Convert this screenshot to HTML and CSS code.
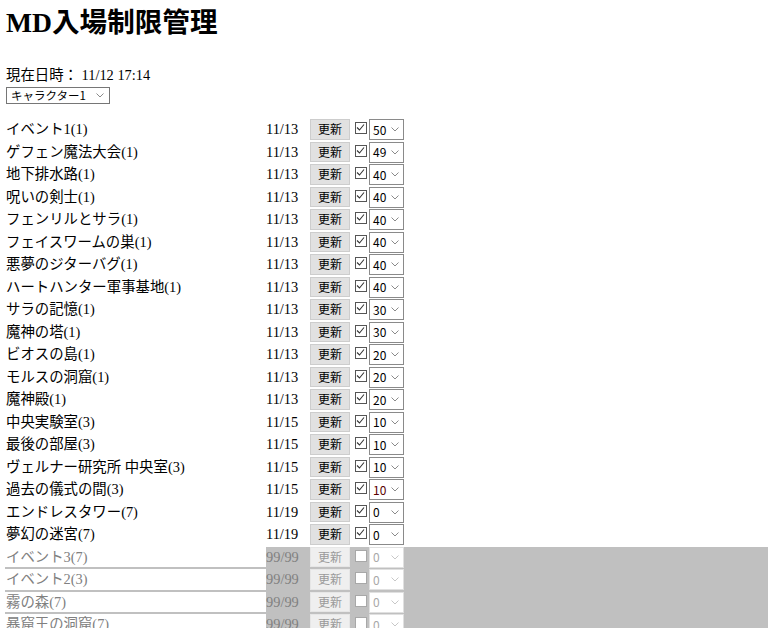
FILE: index.html
```html
<!DOCTYPE html>
<html lang="ja">
<head>
<meta charset="utf-8">
<title>MD入場制限管理</title>
<link rel="stylesheet" href="styles.css">
</head>
<body>
<h1 class="title">MD入場制限管理</h1>
<div class="now">現在日時： 11/12 17:14</div>
<div class="char-select"><span class="char-val">キャラクター1</span><svg class="chev" width="8" height="5" viewBox="0 0 8 5"><polyline points="0.5,0.5 4,4 7.5,0.5" fill="none" stroke="#8a8a8a" stroke-width="1"/></svg></div>
<div class="list">
  <div class="row"><span class="name">イベント1(1)</span><span class="date">11/13</span><button class="btn">更新</button><span class="cb on"><svg width="11" height="11" viewBox="0 0 11 11"><polyline points="2,5.5 4.5,8 9,2.5" fill="none" stroke="#333" stroke-width="1.1"/></svg></span><span class="sel"><span>50</span><svg class="chev" width="8" height="5" viewBox="0 0 8 5"><polyline points="0.5,0.5 4,4 7.5,0.5" fill="none" stroke="#8a8a8a" stroke-width="1"/></svg></span></div>
  <div class="row"><span class="name">ゲフェン魔法大会(1)</span><span class="date">11/13</span><button class="btn">更新</button><span class="cb on"><svg width="11" height="11" viewBox="0 0 11 11"><polyline points="2,5.5 4.5,8 9,2.5" fill="none" stroke="#333" stroke-width="1.1"/></svg></span><span class="sel"><span>49</span><svg class="chev" width="8" height="5" viewBox="0 0 8 5"><polyline points="0.5,0.5 4,4 7.5,0.5" fill="none" stroke="#8a8a8a" stroke-width="1"/></svg></span></div>
  <div class="row"><span class="name">地下排水路(1)</span><span class="date">11/13</span><button class="btn">更新</button><span class="cb on"><svg width="11" height="11" viewBox="0 0 11 11"><polyline points="2,5.5 4.5,8 9,2.5" fill="none" stroke="#333" stroke-width="1.1"/></svg></span><span class="sel"><span>40</span><svg class="chev" width="8" height="5" viewBox="0 0 8 5"><polyline points="0.5,0.5 4,4 7.5,0.5" fill="none" stroke="#8a8a8a" stroke-width="1"/></svg></span></div>
  <div class="row"><span class="name">呪いの剣士(1)</span><span class="date">11/13</span><button class="btn">更新</button><span class="cb on"><svg width="11" height="11" viewBox="0 0 11 11"><polyline points="2,5.5 4.5,8 9,2.5" fill="none" stroke="#333" stroke-width="1.1"/></svg></span><span class="sel"><span>40</span><svg class="chev" width="8" height="5" viewBox="0 0 8 5"><polyline points="0.5,0.5 4,4 7.5,0.5" fill="none" stroke="#8a8a8a" stroke-width="1"/></svg></span></div>
  <div class="row"><span class="name">フェンリルとサラ(1)</span><span class="date">11/13</span><button class="btn">更新</button><span class="cb on"><svg width="11" height="11" viewBox="0 0 11 11"><polyline points="2,5.5 4.5,8 9,2.5" fill="none" stroke="#333" stroke-width="1.1"/></svg></span><span class="sel"><span>40</span><svg class="chev" width="8" height="5" viewBox="0 0 8 5"><polyline points="0.5,0.5 4,4 7.5,0.5" fill="none" stroke="#8a8a8a" stroke-width="1"/></svg></span></div>
  <div class="row"><span class="name">フェイスワームの巣(1)</span><span class="date">11/13</span><button class="btn">更新</button><span class="cb on"><svg width="11" height="11" viewBox="0 0 11 11"><polyline points="2,5.5 4.5,8 9,2.5" fill="none" stroke="#333" stroke-width="1.1"/></svg></span><span class="sel"><span>40</span><svg class="chev" width="8" height="5" viewBox="0 0 8 5"><polyline points="0.5,0.5 4,4 7.5,0.5" fill="none" stroke="#8a8a8a" stroke-width="1"/></svg></span></div>
  <div class="row"><span class="name">悪夢のジターバグ(1)</span><span class="date">11/13</span><button class="btn">更新</button><span class="cb on"><svg width="11" height="11" viewBox="0 0 11 11"><polyline points="2,5.5 4.5,8 9,2.5" fill="none" stroke="#333" stroke-width="1.1"/></svg></span><span class="sel"><span>40</span><svg class="chev" width="8" height="5" viewBox="0 0 8 5"><polyline points="0.5,0.5 4,4 7.5,0.5" fill="none" stroke="#8a8a8a" stroke-width="1"/></svg></span></div>
  <div class="row"><span class="name">ハートハンター軍事基地(1)</span><span class="date">11/13</span><button class="btn">更新</button><span class="cb on"><svg width="11" height="11" viewBox="0 0 11 11"><polyline points="2,5.5 4.5,8 9,2.5" fill="none" stroke="#333" stroke-width="1.1"/></svg></span><span class="sel"><span>40</span><svg class="chev" width="8" height="5" viewBox="0 0 8 5"><polyline points="0.5,0.5 4,4 7.5,0.5" fill="none" stroke="#8a8a8a" stroke-width="1"/></svg></span></div>
  <div class="row"><span class="name">サラの記憶(1)</span><span class="date">11/13</span><button class="btn">更新</button><span class="cb on"><svg width="11" height="11" viewBox="0 0 11 11"><polyline points="2,5.5 4.5,8 9,2.5" fill="none" stroke="#333" stroke-width="1.1"/></svg></span><span class="sel"><span>30</span><svg class="chev" width="8" height="5" viewBox="0 0 8 5"><polyline points="0.5,0.5 4,4 7.5,0.5" fill="none" stroke="#8a8a8a" stroke-width="1"/></svg></span></div>
  <div class="row"><span class="name">魔神の塔(1)</span><span class="date">11/13</span><button class="btn">更新</button><span class="cb on"><svg width="11" height="11" viewBox="0 0 11 11"><polyline points="2,5.5 4.5,8 9,2.5" fill="none" stroke="#333" stroke-width="1.1"/></svg></span><span class="sel"><span>30</span><svg class="chev" width="8" height="5" viewBox="0 0 8 5"><polyline points="0.5,0.5 4,4 7.5,0.5" fill="none" stroke="#8a8a8a" stroke-width="1"/></svg></span></div>
  <div class="row"><span class="name">ビオスの島(1)</span><span class="date">11/13</span><button class="btn">更新</button><span class="cb on"><svg width="11" height="11" viewBox="0 0 11 11"><polyline points="2,5.5 4.5,8 9,2.5" fill="none" stroke="#333" stroke-width="1.1"/></svg></span><span class="sel"><span>20</span><svg class="chev" width="8" height="5" viewBox="0 0 8 5"><polyline points="0.5,0.5 4,4 7.5,0.5" fill="none" stroke="#8a8a8a" stroke-width="1"/></svg></span></div>
  <div class="row"><span class="name">モルスの洞窟(1)</span><span class="date">11/13</span><button class="btn">更新</button><span class="cb on"><svg width="11" height="11" viewBox="0 0 11 11"><polyline points="2,5.5 4.5,8 9,2.5" fill="none" stroke="#333" stroke-width="1.1"/></svg></span><span class="sel"><span>20</span><svg class="chev" width="8" height="5" viewBox="0 0 8 5"><polyline points="0.5,0.5 4,4 7.5,0.5" fill="none" stroke="#8a8a8a" stroke-width="1"/></svg></span></div>
  <div class="row"><span class="name">魔神殿(1)</span><span class="date">11/13</span><button class="btn">更新</button><span class="cb on"><svg width="11" height="11" viewBox="0 0 11 11"><polyline points="2,5.5 4.5,8 9,2.5" fill="none" stroke="#333" stroke-width="1.1"/></svg></span><span class="sel"><span>20</span><svg class="chev" width="8" height="5" viewBox="0 0 8 5"><polyline points="0.5,0.5 4,4 7.5,0.5" fill="none" stroke="#8a8a8a" stroke-width="1"/></svg></span></div>
  <div class="row"><span class="name">中央実験室(3)</span><span class="date">11/15</span><button class="btn">更新</button><span class="cb on"><svg width="11" height="11" viewBox="0 0 11 11"><polyline points="2,5.5 4.5,8 9,2.5" fill="none" stroke="#333" stroke-width="1.1"/></svg></span><span class="sel"><span>10</span><svg class="chev" width="8" height="5" viewBox="0 0 8 5"><polyline points="0.5,0.5 4,4 7.5,0.5" fill="none" stroke="#8a8a8a" stroke-width="1"/></svg></span></div>
  <div class="row"><span class="name">最後の部屋(3)</span><span class="date">11/15</span><button class="btn">更新</button><span class="cb on"><svg width="11" height="11" viewBox="0 0 11 11"><polyline points="2,5.5 4.5,8 9,2.5" fill="none" stroke="#333" stroke-width="1.1"/></svg></span><span class="sel"><span>10</span><svg class="chev" width="8" height="5" viewBox="0 0 8 5"><polyline points="0.5,0.5 4,4 7.5,0.5" fill="none" stroke="#8a8a8a" stroke-width="1"/></svg></span></div>
  <div class="row"><span class="name">ヴェルナー研究所 中央室(3)</span><span class="date">11/15</span><button class="btn">更新</button><span class="cb on"><svg width="11" height="11" viewBox="0 0 11 11"><polyline points="2,5.5 4.5,8 9,2.5" fill="none" stroke="#333" stroke-width="1.1"/></svg></span><span class="sel"><span>10</span><svg class="chev" width="8" height="5" viewBox="0 0 8 5"><polyline points="0.5,0.5 4,4 7.5,0.5" fill="none" stroke="#8a8a8a" stroke-width="1"/></svg></span></div>
  <div class="row"><span class="name">過去の儀式の間(3)</span><span class="date">11/15</span><button class="btn">更新</button><span class="cb on"><svg width="11" height="11" viewBox="0 0 11 11"><polyline points="2,5.5 4.5,8 9,2.5" fill="none" stroke="#333" stroke-width="1.1"/></svg></span><span class="sel"><span class="hl">10</span><svg class="chev" width="8" height="5" viewBox="0 0 8 5"><polyline points="0.5,0.5 4,4 7.5,0.5" fill="none" stroke="#8a8a8a" stroke-width="1"/></svg></span></div>
  <div class="row"><span class="name">エンドレスタワー(7)</span><span class="date">11/19</span><button class="btn">更新</button><span class="cb on"><svg width="11" height="11" viewBox="0 0 11 11"><polyline points="2,5.5 4.5,8 9,2.5" fill="none" stroke="#333" stroke-width="1.1"/></svg></span><span class="sel"><span>0</span><svg class="chev" width="8" height="5" viewBox="0 0 8 5"><polyline points="0.5,0.5 4,4 7.5,0.5" fill="none" stroke="#8a8a8a" stroke-width="1"/></svg></span></div>
  <div class="row"><span class="name">夢幻の迷宮(7)</span><span class="date">11/19</span><button class="btn">更新</button><span class="cb on"><svg width="11" height="11" viewBox="0 0 11 11"><polyline points="2,5.5 4.5,8 9,2.5" fill="none" stroke="#333" stroke-width="1.1"/></svg></span><span class="sel"><span>0</span><svg class="chev" width="8" height="5" viewBox="0 0 8 5"><polyline points="0.5,0.5 4,4 7.5,0.5" fill="none" stroke="#8a8a8a" stroke-width="1"/></svg></span></div>
  <div class="row off"><span class="name">イベント3(7)</span><span class="date">99/99</span><button class="btn" disabled>更新</button><span class="cb"></span><span class="sel"><span>0</span><svg class="chev" width="8" height="5" viewBox="0 0 8 5"><polyline points="0.5,0.5 4,4 7.5,0.5" fill="none" stroke="#c8c8c8" stroke-width="1"/></svg></span></div>
  <div class="row off"><span class="name">イベント2(3)</span><span class="date">99/99</span><button class="btn" disabled>更新</button><span class="cb"></span><span class="sel"><span>0</span><svg class="chev" width="8" height="5" viewBox="0 0 8 5"><polyline points="0.5,0.5 4,4 7.5,0.5" fill="none" stroke="#c8c8c8" stroke-width="1"/></svg></span></div>
  <div class="row off"><span class="name">霧の森(7)</span><span class="date">99/99</span><button class="btn" disabled>更新</button><span class="cb"></span><span class="sel"><span>0</span><svg class="chev" width="8" height="5" viewBox="0 0 8 5"><polyline points="0.5,0.5 4,4 7.5,0.5" fill="none" stroke="#c8c8c8" stroke-width="1"/></svg></span></div>
  <div class="row off"><span class="name">暴窟王の洞窟(7)</span><span class="date">99/99</span><button class="btn" disabled>更新</button><span class="cb"></span><span class="sel"><span>0</span><svg class="chev" width="8" height="5" viewBox="0 0 8 5"><polyline points="0.5,0.5 4,4 7.5,0.5" fill="none" stroke="#c8c8c8" stroke-width="1"/></svg></span></div>
</div>
</body>
</html>
```

FILE: styles.css
```css
html, body {
  margin: 0;
  background: #fff;
}
body {
  padding-left: 6px;
  font-family: "Liberation Serif", "Noto Sans CJK JP", serif;
  font-size: 14.4px;
  color: #000;
  overflow: hidden;
}
.title {
  margin: 0;
  padding-top: 6px;
  font-size: 27.6px;
  line-height: 34px;
  font-weight: bold;
}
.now {
  margin-top: 26px;
  line-height: 18px;
  height: 18px;
}
.char-select {
  margin-top: 3px;
  width: 104px;
  height: 17px;
  box-sizing: border-box;
  border: 1px solid #767676;
  display: flex;
  align-items: center;
  justify-content: space-between;
  padding: 0 5px 0 4px;
  font-family: "Noto Sans CJK JP", sans-serif;
  font-size: 11.5px;
  line-height: 15px;
}
.list {
  margin-top: 15px;
  margin-left: -1px;
}
.row {
  display: flex;
  align-items: flex-start;
  height: 22.5px;
}
.name {
  flex: none;
  width: 260px;
  padding-left: 1px;
  height: 20.5px;
  line-height: 20.5px;
  white-space: nowrap;
  overflow: hidden;
}
.date {
  flex: none;
  width: 44px;
  line-height: 18px;
  padding-top: 1px;
  box-sizing: border-box;
}
.btn {
  flex: none;
  width: 40px;
  height: 20.5px;
  margin: 0;
  padding: 0;
  box-sizing: border-box;
  border: 1px solid #cdcdcd;
  background: #e1e1e1;
  color: #000;
  font-family: "Noto Sans CJK JP", sans-serif;
  font-size: 12px;
  line-height: 18px;
}
.cb {
  flex: none;
  width: 12px;
  height: 12px;
  box-sizing: border-box;
  margin: 3px 2px 0 5px;
  border: 1px solid #555;
  background: #fff;
  position: relative;
}
.cb svg {
  position: absolute;
  left: -1px;
  top: -1px;
}
.sel {
  flex: none;
  width: 35px;
  height: 21px;
  box-sizing: border-box;
  border: 1px solid #8a8a8a;
  background: #fff;
  display: flex;
  align-items: center;
  justify-content: space-between;
  padding: 0 4px 0 3px;
  font-family: "Noto Sans CJK JP", sans-serif;
  font-size: 12px;
  line-height: 16px;
}
.chev {
  flex: none;
  display: block;
}
.hl {
  color: #5a0000;
}
.row.off {
  background: #c0c0c0;
  color: #808080;
}
.row.off .name {
  background: #fff;
}
.row.off .btn {
  background: #efefef;
  border-color: #e6e6e6;
  color: #9a9a9a;
}
.row.off .cb {
  border-color: #a8a8a8;
}
.row.off .sel {
  border-color: #e0e0e0;
  color: #a8a8a8;
}
```
